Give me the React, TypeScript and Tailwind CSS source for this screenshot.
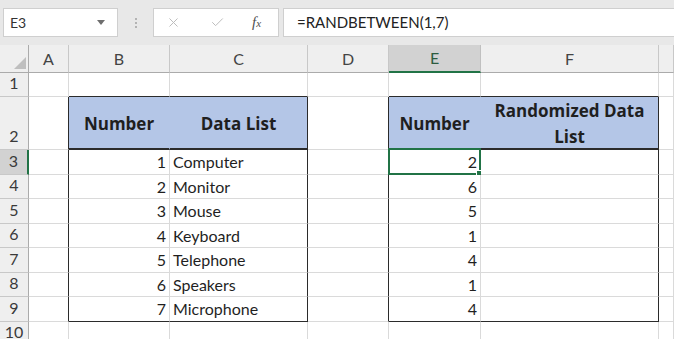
import { X, Check } from 'lucide-react';

const COLS = ['A', 'B', 'C', 'D', 'E', 'F', ''];
const ROW_HEIGHTS = [24, 53, 25, 24, 25, 24, 25, 24, 25, 24];

const ITEMS = ['Computer', 'Monitor', 'Mouse', 'Keyboard', 'Telephone', 'Speakers', 'Microphone'];
const RANDOM = [2, 6, 5, 1, 4, 1, 4];

const inTable = (c: number) => c === 1 || c === 2 || c === 4 || c === 5;

function cellBorders(r: number, c: number) {
  const body = r >= 2 && r <= 9;
  let right = 'border-r-[#dadada]';
  let bottom = 'border-b border-b-[#dadada]';

  if (body && (c === 0 || c === 3 || c === 2 || c === 5)) right = 'border-r-[#2b2b2b]';
  if (r === 2 && (c === 1 || c === 4)) right = 'border-r-[#b4c6e7]';

  if (inTable(c)) {
    if (r === 1 || r === 9) bottom = 'border-b border-b-[#2b2b2b]';
    if (r === 2) bottom = 'border-b-2 border-b-[#2b2b2b]';
  }
  return `border-r ${right} ${bottom}`;
}

const HEAD_FONT = { fontFamily: '"Open Sans", Lato, sans-serif' };

function CellContent({ r, c }: { r: number; c: number }) {
  if (r === 2) {
    if (c === 1 || c === 4)
      return (
        <span className="font-bold text-[17px]" style={HEAD_FONT}>
          Number
        </span>
      );
    if (c === 2)
      return (
        <span className="font-bold text-[17px]" style={HEAD_FONT}>
          Data List
        </span>
      );
    if (c === 5)
      return (
        <span className="font-bold text-[17px] text-center leading-[26px]" style={HEAD_FONT}>
          Randomized Data
          <br />
          List
        </span>
      );
    return null;
  }
  if (r >= 3 && r <= 9) {
    const i = r - 3;
    if (c === 1) return <span>{i + 1}</span>;
    if (c === 2) return <span>{ITEMS[i]}</span>;
    if (c === 4) return <span>{RANDOM[i]}</span>;
  }
  return null;
}

function alignFor(r: number, c: number) {
  if (r === 2) return 'justify-center items-center pt-[3px]';
  if (c === 1 || c === 4) return 'justify-end items-center pr-[3px]';
  return 'justify-start items-center pl-[3px]';
}

export default function App() {
  return (
    <div
      className="w-[674px] h-[339px] overflow-hidden bg-white text-[#1f1f1f]"
      style={{ fontFamily: 'Lato, "Noto Sans", sans-serif' }}
    >
      {/* formula bar */}
      <div className="h-[45px] bg-[#e8e8e8] flex items-start pt-[8px] pl-[3px]">
        <div className="w-[115px] h-[29px] bg-white border border-[#cfcfcf] flex items-center justify-between pl-[6px] pr-[12px] text-[14px] text-[#333]">
          <span>E3</span>
          <span className="w-0 h-0 border-l-[4px] border-r-[4px] border-t-[5px] border-l-transparent border-r-transparent border-t-[#6e6e6e]" />
        </div>
        <div className="w-[35px] h-[29px] flex flex-col items-center justify-center gap-[2px]">
          <span className="w-[2px] h-[2px] bg-[#b3b3b3]" />
          <span className="w-[2px] h-[2px] bg-[#b3b3b3]" />
          <span className="w-[2px] h-[2px] bg-[#b3b3b3]" />
        </div>
        <div className="w-[126px] h-[29px] bg-white border border-[#cfcfcf] flex items-center pl-[12px]">
          <X className="w-[15px] h-[15px] text-[#bdbdbd]" strokeWidth={1.6} />
          <Check className="w-[15px] h-[15px] text-[#bdbdbd] ml-[29px]" strokeWidth={1.6} />
          <span
            className="ml-[27px] italic text-[#505050] text-[15px] leading-none"
            style={{ fontFamily: '"Liberation Serif", serif' }}
          >
            f<span className="text-[11px]">x</span>
          </span>
        </div>
        <div className="flex-1 h-[29px] ml-[4px] bg-white border border-[#cfcfcf] border-r-0 flex items-center pl-[13px] text-[15px] text-[#222]">
          =RANDBETWEEN(1,7)
        </div>
      </div>

      {/* sheet */}
      <div
        className="grid"
        style={{
          gridTemplateColumns: '29px 40px 101px 138px 81px 92px 178px 1fr',
          gridTemplateRows: `28px ${ROW_HEIGHTS.map((h) => `${h}px`).join(' ')}`,
        }}
      >
        {/* corner + column headers */}
        <div className="bg-[#efefef] border-r border-b border-[#ababab] flex items-end justify-end pr-[2px] pb-[3px]">
          <span className="w-0 h-0 border-t-[12px] border-t-transparent border-r-[12px] border-r-[#bfbfbf]" />
        </div>
        {COLS.map((col, c) => (
          <div
            key={c}
            className={
              c === 4
                ? 'bg-[#d2d2d2] border-r border-r-[#c0c0c0] border-b-2 border-b-[#217346] flex items-center justify-center text-[16px] text-[#2d5c40]'
                : 'bg-[#efefef] border-r border-r-[#c8c8c8] border-b border-b-[#ababab] flex items-center justify-center text-[16px] text-[#444]'
            }
          >
            {col}
          </div>
        ))}

        {ROW_HEIGHTS.map((_, idx) => {
          const r = idx + 1;
          return [
            <div
              key={`h${r}`}
              className={
                r === 3
                  ? 'bg-[#d2d2d2] border-r-2 border-r-[#217346] border-b border-b-[#c8c8c8] flex items-end justify-center pb-[1px] text-[16px] text-[#3a3a3a]'
                  : 'bg-[#efefef] border-r border-r-[#ababab] border-b border-b-[#c8c8c8] flex items-end justify-center pb-[1px] text-[16px] text-[#3a3a3a]'
              }
            >
              {r}
            </div>,
            ...COLS.map((_, c) => (
              <div
                key={`${r}-${c}`}
                className={`relative flex text-[16px] ${cellBorders(r, c)} ${alignFor(r, c)} ${
                  r === 2 && inTable(c) ? 'bg-[#b4c6e7]' : 'bg-white'
                }`}
              >
                <CellContent r={r} c={c} />
                {r === 3 && c === 4 && (
                  <div className="absolute -left-px -top-[2px] right-[-1px] bottom-[-1px] border-2 border-[#217346] pointer-events-none">
                    <div className="absolute -right-[4px] -bottom-[4px] w-[7px] h-[7px] bg-[#217346] border border-white" />
                  </div>
                )}
              </div>
            )),
          ];
        })}
      </div>
    </div>
  );
}
